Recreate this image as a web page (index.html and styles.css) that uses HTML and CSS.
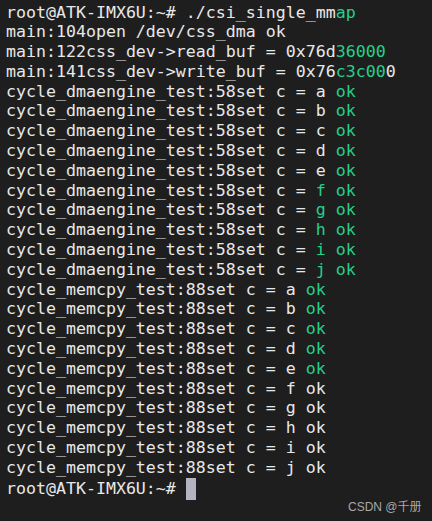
FILE: index.html
```html
<!DOCTYPE html>
<html>
<head>
<meta charset="utf-8">
<link rel="stylesheet" href="styles.css">
</head>
<body>
<div class="term">
<div class="line">root@ATK-IMX6U:~# ./csi_single_mm<span class="g">ap</span></div>
<div class="line">main:104open /dev/css_dma ok</div>
<div class="line">main:122css_dev-&gt;read_buf = 0x76d<span class="g">36000</span></div>
<div class="line">main:141css_dev-&gt;write_buf = 0x76<span class="g">c3c00</span>0</div>
<div class="line">cycle_dmaengine_test:58set c = a <span class="g">ok</span></div>
<div class="line">cycle_dmaengine_test:58set c = b <span class="g">ok</span></div>
<div class="line">cycle_dmaengine_test:58set c = c <span class="g">ok</span></div>
<div class="line">cycle_dmaengine_test:58set c = d <span class="g">ok</span></div>
<div class="line">cycle_dmaengine_test:58set c = e <span class="g">ok</span></div>
<div class="line">cycle_dmaengine_test:58set c = <span class="g">f ok</span></div>
<div class="line">cycle_dmaengine_test:58set c = <span class="g">g ok</span></div>
<div class="line">cycle_dmaengine_test:58set c = <span class="g">h ok</span></div>
<div class="line">cycle_dmaengine_test:58set c = <span class="g">i ok</span></div>
<div class="line">cycle_dmaengine_test:58set c = <span class="g">j ok</span></div>
<div class="line">cycle_memcpy_test:88set c = a <span class="g">ok</span></div>
<div class="line">cycle_memcpy_test:88set c = b <span class="g">ok</span></div>
<div class="line">cycle_memcpy_test:88set c = c <span class="g">ok</span></div>
<div class="line">cycle_memcpy_test:88set c = d <span class="g">ok</span></div>
<div class="line">cycle_memcpy_test:88set c = e <span class="g">ok</span></div>
<div class="line">cycle_memcpy_test:88set c = f ok</div>
<div class="line">cycle_memcpy_test:88set c = g ok</div>
<div class="line">cycle_memcpy_test:88set c = h ok</div>
<div class="line">cycle_memcpy_test:88set c = i ok</div>
<div class="line">cycle_memcpy_test:88set c = j ok</div>
<div class="line">root@ATK-IMX6U:~# <span class="cursor"></span></div>
</div>
<div class="mark">CSDN @千册</div>
</body>
</html>
```
FILE: styles.css
```css
html, body {
  margin: 0;
  padding: 0;
  background: #1e1e1e;
}
body {
  width: 432px;
  height: 521px;
  overflow: hidden;
  position: relative;
}
.term {
  padding: 2.5px 0 0 6px;
  font-family: "DejaVu Sans Mono", monospace;
  font-size: 16.6px;
  line-height: 19.8px;
  color: #e8e8e8;
}
.line {
  white-space: pre;
  height: 19.8px;
}
.g {
  color: #23d18b;
}
.cursor {
  display: inline-block;
  width: 10px;
  height: 22px;
  background: #b3b3c2;
  vertical-align: -6px;
}
.mark {
  position: absolute;
  left: 348px;
  top: 497px;
  font-family: "Liberation Sans", "Noto Sans CJK SC", sans-serif;
  font-size: 12px;
  color: #a8a8a8;
}
```
